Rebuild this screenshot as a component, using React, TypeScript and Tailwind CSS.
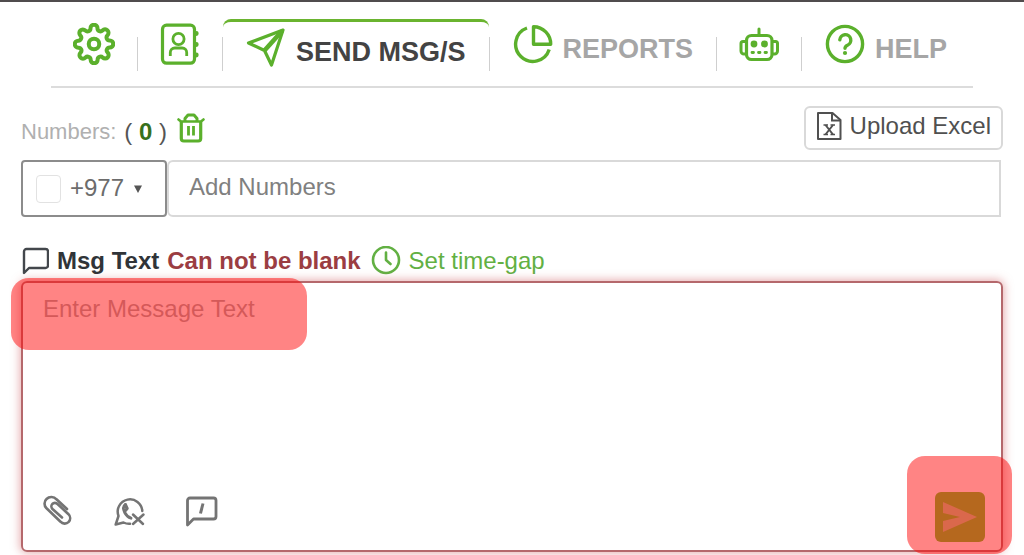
import type { ReactNode } from "react";
import { FiSettings } from "react-icons/fi";

const iconClass = "size-10 shrink-0 text-[#5bb02c]";

function ContactBookIcon() {
  return (
    <svg viewBox="0 0 40 42" className="h-[42px] w-10 shrink-0 text-[#5bb02c]" fill="none" stroke="currentColor" strokeWidth="2.800" aria-hidden="true">
      <rect x="2.500" y="2.200" width="32" height="38" rx="4" strokeWidth="3.200" />
      <circle cx="18.500" cy="16" r="5.600" />
      <path d="M10.300 33v-3.500a4.500 4.500 0 0 1 4.500-4.500h7.400a4.500 4.500 0 0 1 4.500 4.500V33" />
      <path d="M36.500 10v.8M36.500 21v.8M36.500 31.500v.8" strokeWidth="4.200" strokeLinecap="round" />
    </svg>
  );
}

function PlaneIcon() {
  return (
    <svg viewBox="0 0 40 40" className={iconClass} fill="none" stroke="currentColor" strokeWidth="3.200" strokeLinejoin="round" aria-hidden="true">
      <path d="M37 3 2.500 16l16 7.500 7 14.500Z" />
      <path d="M36 4 18.500 23.500" strokeWidth="4.600" />
    </svg>
  );
}

function PieIcon() {
  return (
    <svg viewBox="0 0 40 40" className={iconClass} fill="none" stroke="currentColor" strokeWidth="3.400" aria-hidden="true">
      <path d="M14 4A17.200 17.200 0 1 0 36.200 25.500" />
      <path d="M20.500 2.700v17.600h17.200A17.300 17.300 0 0 0 20.500 2.700Z" strokeLinejoin="round" />
    </svg>
  );
}

function RobotIcon() {
  return (
    <svg viewBox="0 0 40 40" className={iconClass} fill="none" stroke="currentColor" strokeWidth="3" strokeLinecap="round" aria-hidden="true">
      <path d="M20 5v6" />
      <rect x="7.500" y="11.500" width="25.500" height="24" rx="5" strokeWidth="3.200" />
      <path d="M7 17.500H4a2 2 0 0 0-2 2V27a3 3 0 0 0 3 3h2M33.500 17.500h3a2 2 0 0 1 2 2V27a3 3 0 0 1-3 3h-2" strokeWidth="3" />
      <circle cx="15" cy="20" r="3.400" fill="currentColor" stroke="none" />
      <circle cx="25.500" cy="20" r="3.400" fill="currentColor" stroke="none" />
      <path d="M13 28.500h1.500M19.500 28.500H21M26 28.500h1.500" strokeWidth="2.800" />
    </svg>
  );
}

function HelpIcon() {
  return (
    <svg viewBox="0 0 40 40" className={iconClass} fill="none" stroke="currentColor" strokeWidth="3.400" aria-hidden="true">
      <circle cx="20" cy="20" r="17.600" />
      <path d="M14.800 15.800a5.500 5.500 0 1 1 7.700 5.400c-1.600.7-2.500 1.300-2.500 3" strokeWidth="3.400" strokeLinecap="round" />
      <circle cx="20" cy="29" r="2.100" fill="currentColor" stroke="none" />
    </svg>
  );
}

function TrashIcon() {
  return (
    <svg viewBox="0 0 28 30" className="h-[30px] w-7 text-[#5bb02c]" fill="none" stroke="currentColor" strokeWidth="3" strokeLinejoin="round" aria-hidden="true">
      <path d="M1.500 6.500 4 8.500h20l2.500-2" strokeWidth="2.600" strokeLinecap="round" />
      <path d="M8 8V5.500L11 2h6l3 3.500V8" />
      <path d="M4.300 9v16.500a2.500 2.500 0 0 0 2.500 2.500h14.400a2.500 2.500 0 0 0 2.500-2.500V9" strokeWidth="3.200" />
      <path d="M11.500 13v9.500M16.500 13v9.500" strokeWidth="2.800" />
    </svg>
  );
}

function ExcelIcon() {
  return (
    <svg viewBox="0 0 26 30" className="h-[30px] w-[26px] shrink-0" fill="none" stroke="currentColor" strokeWidth="2" aria-hidden="true">
      <path d="M2 2h14.500L24.500 9v19H2Z" strokeLinejoin="round" />
      <path d="M16 2v7.500h8" />
      <path d="m9.500 14 7.500 9.500M17 14 9.500 23.500" strokeWidth="2" />
      <path d="M7.500 14H12M14.500 14H19M7.500 23.500H12M14.500 23.500H19" strokeWidth="1.500" />
    </svg>
  );
}

function BubbleIcon() {
  return (
    <svg viewBox="0 0 28 28" className="size-7 shrink-0 text-[#43474c]" fill="none" stroke="currentColor" strokeWidth="2.400" strokeLinejoin="round" aria-hidden="true">
      <path d="M3 26V4.500A2.500 2.500 0 0 1 5.500 2h19A2.500 2.500 0 0 1 27 4.500v14a2.500 2.500 0 0 1-2.500 2.500H8Z" />
    </svg>
  );
}

function ClockIcon() {
  return (
    <svg viewBox="0 0 30 30" className="size-[30px]" fill="none" stroke="currentColor" strokeWidth="2.600" aria-hidden="true">
      <circle cx="15" cy="14" r="13" />
      <path d="M15 6.500V14l4.500 4" strokeLinecap="round" strokeLinejoin="round" />
    </svg>
  );
}

function ClipIcon() {
  return (
    <svg viewBox="0 0 32 32" className="size-8" fill="none" stroke="currentColor" strokeWidth="2.600" strokeLinecap="round" aria-hidden="true">
      <path d="M25 14 14.500 4.300A6.800 6.800 0 0 0 4.500 4a6.400 6.400 0 0 0-.2 9l14.200 13.700a5.600 5.600 0 0 0 8.200.2 5.600 5.600 0 0 0-.2-7.700L15.500 9a3.600 3.600 0 0 0-5.200 0 3.600 3.600 0 0 0 .2 5L20 22.500" />
    </svg>
  );
}

function WhatsappIcon() {
  return (
    <svg viewBox="0 0 32 32" className="size-8" fill="none" stroke="currentColor" strokeWidth="2.500" strokeLinecap="round" strokeLinejoin="round" aria-hidden="true">
      <path d="M28.300 16A12.300 12.300 0 1 0 4.500 21L1.700 29.500 9.500 27.500c2 1 4 1.500 6.500 1.300" />
      <path d="M11.500 9.500c-2.500 1.500-2.600 4.500-.8 8 1.500 2.900 3.300 4.700 6.300 5.700" strokeWidth="2.800" />
      <path d="m11.500 9.800 1.600 3.700-1.700 2" strokeWidth="3.200" />
      <path d="m19 19.500 10 9.500M29.500 19.500 19 29" />
    </svg>
  );
}

function NoteIcon() {
  return (
    <svg viewBox="0 0 32 32" className="size-8" fill="none" stroke="currentColor" strokeWidth="2.800" strokeLinejoin="round" aria-hidden="true">
      <path d="M1.500 30V5.500A2.500 2.500 0 0 1 4 3h23.500A2.500 2.500 0 0 1 30 5.500v16a2.500 2.500 0 0 1-2.500 2.500H7.500Z" />
      <path d="m17 8.500-2.500 10" strokeWidth="3" />
    </svg>
  );
}

function Tab({ name, icon, active, label }: { name: string; icon: ReactNode; active?: boolean; label?: string }) {
  return (
    <a
      href={"#" + name}
      aria-label={label ?? name}
      aria-current={active ? "page" : undefined}
      className={
        "flex items-start pt-1 pb-[18px] text-[27px] leading-[28px] font-bold whitespace-nowrap " +
        (label ? "px-[23px] " : "px-[22px] ") +
        (active ? "rounded-t-lg border-t-3 border-[#6ab42f] text-[#434343]" : "text-[#a6a6a6]")
      }
    >
      <span className="flex h-[42px] items-center gap-2.5">
        {icon}
        {label && <span className="pt-2.5">{label}</span>}
      </span>
    </a>
  );
}

function Divider() {
  return <span aria-hidden="true" className="mt-[18px] h-[34px] w-px shrink-0 bg-[#cfcfcf]" />;
}

export default function App() {
  return (
    <div className="overflow-hidden border-t-2 border-[#504c4d] bg-white pb-[3px] font-['Liberation_Sans',Arial,sans-serif] text-2xl leading-[28px]">
      <nav className="mx-[51px] flex border-b-2 border-[#dcdcdc] pt-[17px]">
        <Tab name="settings" icon={<FiSettings className="size-[42px] shrink-0 text-[#5bb02c]" strokeWidth={2.3} aria-hidden="true" />} />
        <Divider />
        <Tab name="contacts" icon={<ContactBookIcon />} />
        <Divider />
        <Tab name="send" icon={<PlaneIcon />} label="SEND MSG/S" active />
        <Divider />
        <Tab name="reports" icon={<PieIcon />} label="REPORTS" />
        <Divider />
        <Tab name="bot" icon={<RobotIcon />} />
        <Divider />
        <Tab name="help" icon={<HelpIcon />} label="HELP" />
      </nav>

      <main className="px-[21px] pt-[18px]">
        <div className="flex items-center justify-between">
          <div className="flex items-center">
            <label htmlFor="numbers" className="pt-2 text-[22px] text-[#b0b0b0]">Numbers:</label>
            <span className="ml-2 pt-2 text-[#555]">
              ( <b className="text-[#37701c]">0</b> )
            </span>
            <button type="button" aria-label="Clear numbers" className="ml-2.5">
              <TrashIcon />
            </button>
          </div>
          <button type="button" className="flex h-11 items-center gap-2 rounded-md border-2 border-[#d9d9d9] px-2.5 pb-1 text-[#505050]">
            <ExcelIcon />
            Upload Excel
          </button>
        </div>

        <div className="mt-2.5 flex h-[57px]">
          <div className="flex w-[146px] shrink-0 items-center rounded-sm border-2 border-[#8c8c8c] pl-[13px]">
            <span className="h-7 w-[25px] shrink-0 rounded-sm border border-[#e2e2e2]" />
            <select aria-label="Country code" defaultValue="+977" className="ml-[9px] w-[56px] appearance-none bg-transparent pb-0.5 text-[#6c6c6c] outline-none">
              <option>+977</option>
            </select>
            <svg viewBox="0 0 8 8" className="ml-2 size-2 text-[#555]" aria-hidden="true">
              <path d="M0 .5h8L4 8Z" fill="currentColor" />
            </svg>
          </div>
          <input
            id="numbers"
            type="text"
            placeholder="Add Numbers"
            className="mr-0.5 min-w-0 flex-1 rounded-l-md border-2 border-[#d9d9d9] px-5 pb-1 text-[#555] outline-none placeholder:text-[#808080]"
          />
        </div>

        <div className="mt-[27px] flex h-[30px] items-center">
          <label htmlFor="message" className="flex items-center gap-2 pt-1 font-bold text-[#303438]">
            <BubbleIcon />
            Msg Text
          </label>
          <span className="ml-2 pt-1 font-bold text-[#9b3d42]">Can not be blank</span>
          <button type="button" className="ml-2.5 flex items-center gap-2 pt-1 text-[#62b043]">
            <ClockIcon />
            Set time-gap
          </button>
        </div>

        <div className="relative mt-[7px] rounded-md border-2 border-[#b5686c] shadow-[0_0_10px_1px_rgba(206,85,90,0.5)]">
          <textarea
            id="message"
            placeholder="Enter Message Text"
            className="block h-[209px] w-full resize-none bg-transparent px-5 pt-3 outline-none placeholder:text-[#a9a9a9]"
          />
          <div className="flex items-center justify-between pr-4 pb-2 pl-[19px]">
            <div className="flex items-center gap-10 pb-3 text-[#747474]">
              <button type="button" aria-label="Attach file"><ClipIcon /></button>
              <button type="button" aria-label="Clear WhatsApp formatting"><WhatsappIcon /></button>
              <button type="button" aria-label="Insert template"><NoteIcon /></button>
            </div>
            <button type="button" aria-label="Send message" className="flex size-[50px] items-center justify-center rounded-md bg-[#6ac732]">
              <svg viewBox="0 0 34 30" className="h-[30px] w-[34px]" fill="#b5c78e" aria-hidden="true">
                <path d="M0 0 34 15 0 30V19l17-4L0 11Z" />
              </svg>
            </button>
          </div>
          <div aria-hidden="true" className="pointer-events-none absolute -top-[5px] -left-3 h-[72px] w-[296px] rounded-[18px] bg-[#ff0a0a]/50" />
          <div aria-hidden="true" className="pointer-events-none absolute -right-[11px] -bottom-1 h-[98px] w-[105px] rounded-[18px] bg-[#ff0a0a]/50" />
        </div>
      </main>
    </div>
  );
}
